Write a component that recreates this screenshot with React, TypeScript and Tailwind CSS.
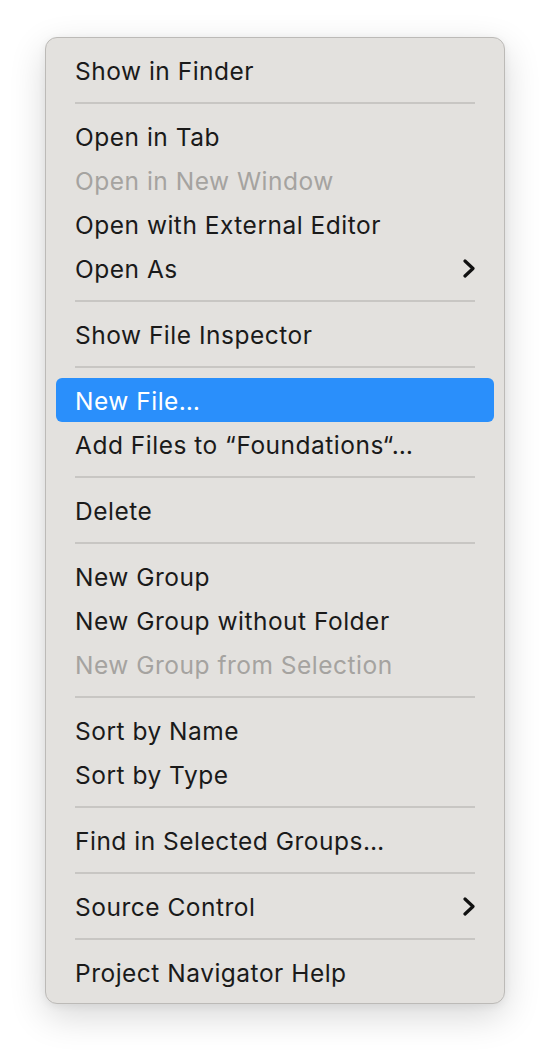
import React from "react";

type Item =
  | { type: "sep" }
  | { type: "item"; label: string; disabled?: boolean; active?: boolean; submenu?: boolean };

const items: Item[] = [
  { type: "item", label: "Show in Finder" },
  { type: "sep" },
  { type: "item", label: "Open in Tab" },
  { type: "item", label: "Open in New Window", disabled: true },
  { type: "item", label: "Open with External Editor" },
  { type: "item", label: "Open As", submenu: true },
  { type: "sep" },
  { type: "item", label: "Show File Inspector" },
  { type: "sep" },
  { type: "item", label: "New File…", active: true },
  { type: "item", label: "Add Files to “Foundations“…" },
  { type: "sep" },
  { type: "item", label: "Delete" },
  { type: "sep" },
  { type: "item", label: "New Group" },
  { type: "item", label: "New Group without Folder" },
  { type: "item", label: "New Group from Selection", disabled: true },
  { type: "sep" },
  { type: "item", label: "Sort by Name" },
  { type: "item", label: "Sort by Type" },
  { type: "sep" },
  { type: "item", label: "Find in Selected Groups…" },
  { type: "sep" },
  { type: "item", label: "Source Control", submenu: true },
  { type: "sep" },
  { type: "item", label: "Project Navigator Help" },
];

function Chevron() {
  return (
    <svg width="12" height="19" viewBox="0 0 12 19" fill="none">
      <polyline
        points="2,2 10,9.5 2,17"
        stroke="#111"
        strokeWidth="3.2"
        strokeLinecap="round"
        strokeLinejoin="round"
      />
    </svg>
  );
}

export default function App() {
  return (
    <div
      className="w-[550px] h-[1058px] bg-white pl-[45px] pt-[37px]"
      style={{ fontFamily: "Inter, 'Noto Sans', sans-serif" }}
    >
      <div className="w-[460px] rounded-[12px] border border-[#bcbab7] bg-[#e3e1de] px-[10px] pt-[10px] pb-[9px] shadow-[0_12px_36px_rgba(0,0,0,0.16),0_2px_8px_rgba(0,0,0,0.06)]">
        {items.map((it, i) =>
          it.type === "sep" ? (
            <div key={i} className="h-[22px] px-[19px] flex items-center">
              <div className="h-[2px] w-full bg-[#c8c6c3]" />
            </div>
          ) : (
            <div
              key={i}
              className={
                "h-[44px] px-[19px] rounded-[6px] flex items-center justify-between text-[24.5px] leading-none tracking-[0.5px] " +
                (it.active
                  ? "bg-[#2a8ffb] text-white"
                  : it.disabled
                  ? "text-[#a5a3a0]"
                  : "text-[#1a1a1a]")
              }
            >
              <span className="pt-[2px]">{it.label}</span>
              {it.submenu && <Chevron />}
            </div>
          )
        )}
      </div>
    </div>
  );
}
